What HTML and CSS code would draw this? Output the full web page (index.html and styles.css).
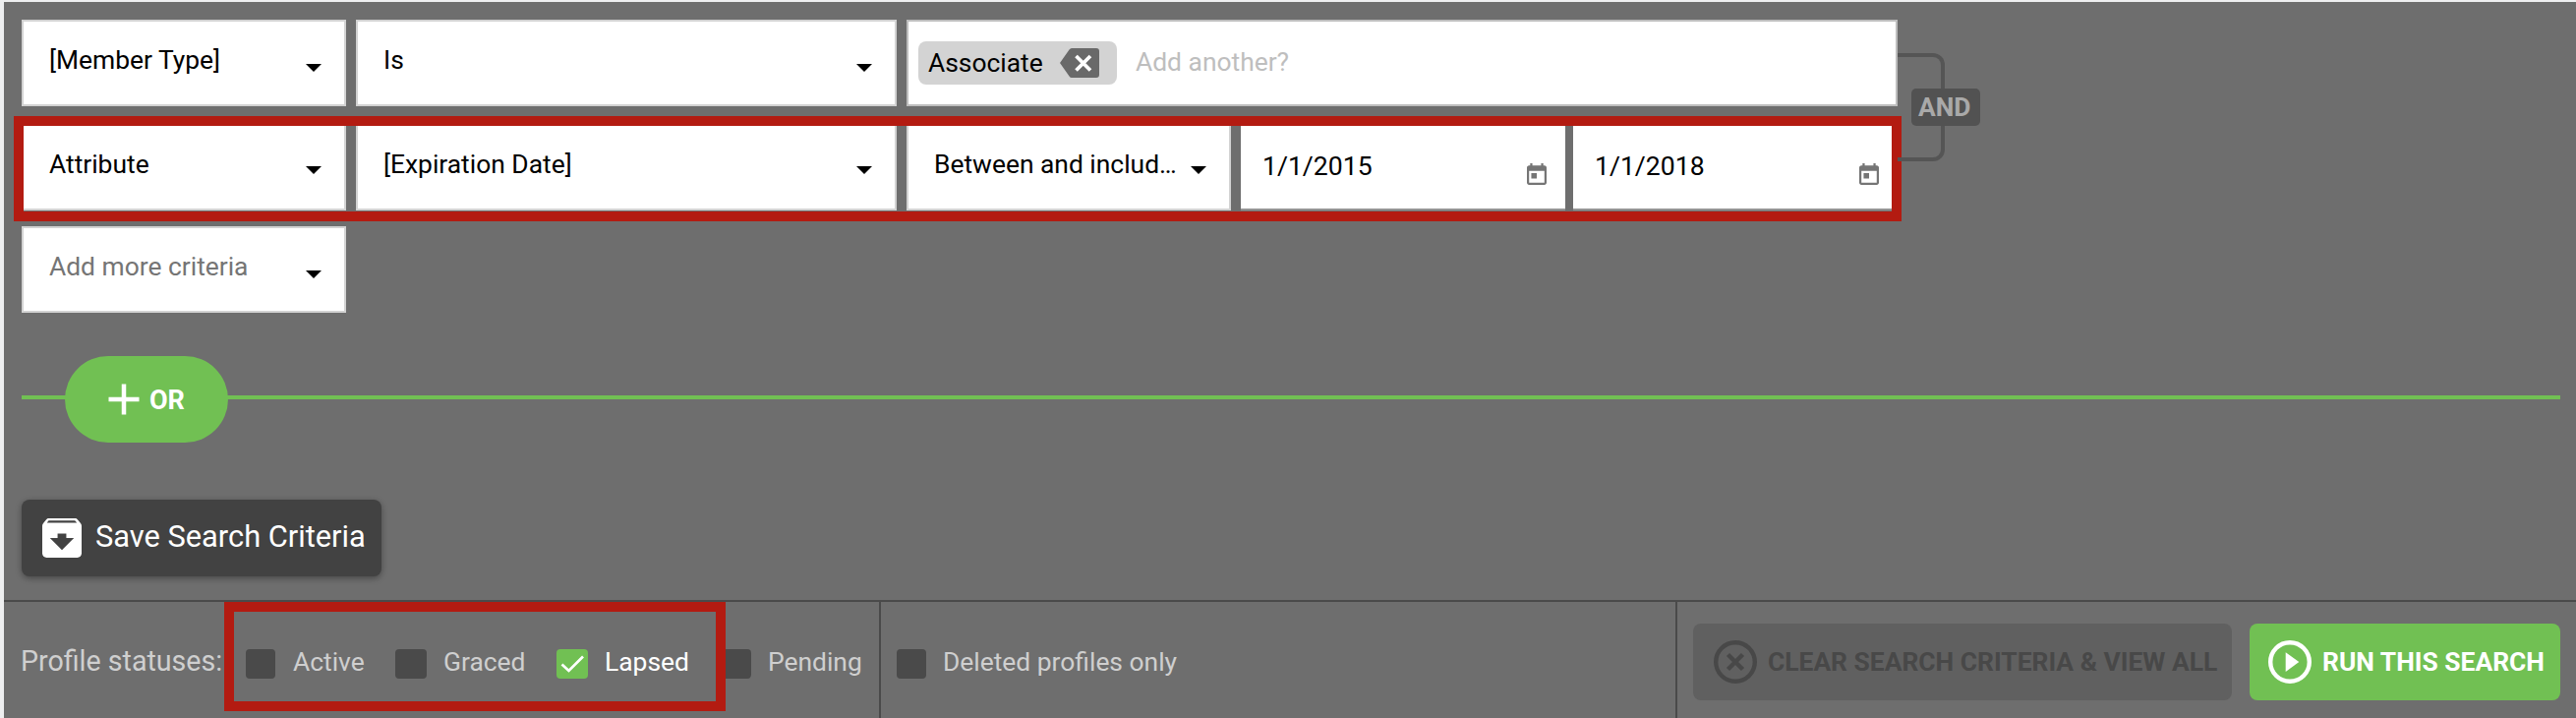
FILE: index.html
```html
<!DOCTYPE html>
<html lang="en">
<head>
    <meta charset="UTF-8">
    <meta name="viewport" content="width=device-width, initial-scale=1.0">
    <title>Advanced Search</title>
    <link rel="stylesheet" href="styles.css">
</head>
<body>
    <main class="search-panel">
        <section class="criteria">
            <div class="criteria-rows">
                <div class="row">
                    <div class="field select">
                        <span class="value">[Member Type]</span>
                        <span class="arrow"></span>
                    </div>
                    <div class="field select wide">
                        <span class="value">Is</span>
                        <span class="arrow"></span>
                    </div>
                    <div class="field tags">
                        <span class="tag">
                            Associate
                            <svg class="remove" width="40" height="30" viewBox="0 0 40 30">
                                <path d="M9.500 1.500Q10.500 0 12 0H37Q40 0 40 3V27Q40 30 37 30H12Q10.500 30 9.500 28.500L0 15z" fill="#696969"/>
                                <path d="M16.500 8L31 22.500M31 8L16.500 22.500" stroke="#fff" stroke-width="3.700"/>
                            </svg>
                        </span>
                        <span class="placeholder">Add another?</span>
                    </div>
                </div>

                <div class="row highlighted">
                    <div class="field select">
                        <span class="value">Attribute</span>
                        <span class="arrow"></span>
                    </div>
                    <div class="field select wide">
                        <span class="value">[Expiration Date]</span>
                        <span class="arrow"></span>
                    </div>
                    <div class="field select">
                        <span class="value">Between and includ…</span>
                        <span class="arrow"></span>
                    </div>
                    <div class="dates">
                        <div class="date">
                            <span>1/1/2015</span>
                            <svg class="calendar" width="20" height="22" viewBox="3 1 18 20" preserveAspectRatio="none">
                                <path d="M19 3h-1V1h-2v2H8V1H6v2H5c-1.110 0-1.990.9-1.990 2L3 19c0 1.100.89 2 2 2h14c1.100 0 2-.9 2-2V5c0-1.100-.9-2-2-2zm0 16H5V8h14v11zM7 10h5v5H7z"/>
                            </svg>
                        </div>
                        <div class="date">
                            <span>1/1/2018</span>
                            <svg class="calendar" width="20" height="22" viewBox="3 1 18 20" preserveAspectRatio="none">
                                <path d="M19 3h-1V1h-2v2H8V1H6v2H5c-1.110 0-1.990.9-1.990 2L3 19c0 1.100.89 2 2 2h14c1.100 0 2-.9 2-2V5c0-1.100-.9-2-2-2zm0 16H5V8h14v11zM7 10h5v5H7z"/>
                            </svg>
                        </div>
                    </div>
                    <div class="marker marker-row"></div>
                </div>

                <div class="row">
                    <div class="field select empty">
                        <span class="value">Add more criteria</span>
                        <span class="arrow"></span>
                    </div>
                </div>
            </div>

            <div class="joiner">
                <span class="joiner-label">AND</span>
            </div>
        </section>

        <div class="or-divider">
            <button class="or-button">
                <svg width="32" height="32" viewBox="0 0 32 32">
                    <path d="M16 0.500V31.500M0.500 16H31.500" stroke="#fff" stroke-width="4.500"/>
                </svg>
                <span>OR</span>
            </button>
        </div>

        <button class="save-button">
            <svg width="40" height="40" viewBox="3 3 18 18">
                <path fill="#fff" d="M20.540 5.230l-1.390-1.680C18.880 3.210 18.470 3 18 3H6c-.47 0-.88.21-1.160.55L3.460 5.230C3.170 5.570 3 6.020 3 6.500V19c0 1.100.9 2 2 2h14c1.100 0 2-.9 2-2V6.500c0-.48-.17-.93-.46-1.270zM12 17.500L6.500 12H10v-2h4v2h3.500L12 17.500zM5.120 5l.81-1h12l.94 1H5.120z"/>
            </svg>
            <span>Save Search Criteria</span>
        </button>

        <footer class="status-bar">
            <div class="statuses">
                <span class="statuses-title">Profile statuses:</span>
                <div class="status-list">
                    <label class="status"><span class="box small"></span>Active</label>
                    <label class="status"><span class="box"></span>Graced</label>
                    <label class="status checked">
                        <span class="box">
                            <svg width="32" height="30" viewBox="0 0 32 30">
                                <path d="M5.500 15.500L12.500 22L27 7.500" fill="none" stroke="#fff" stroke-width="2.700"/>
                            </svg>
                        </span>Lapsed
                    </label>
                    <label class="status"><span class="box"></span>Pending</label>
                </div>
                <div class="marker marker-statuses"></div>
            </div>
            <div class="deleted">
                <label class="status"><span class="box small"></span>Deleted profiles only</label>
            </div>
            <div class="actions">
                <button class="action clear">
                    <svg width="44" height="44" viewBox="0 0 44 44" fill="none" stroke="#484848">
                        <circle cx="22" cy="22" r="19.800" stroke-width="4.400"/>
                        <path d="M14.500 14.500L29.500 29.500M29.500 14.500L14.500 29.500" stroke-width="4.400"/>
                    </svg>
                    <span>CLEAR SEARCH CRITERIA &amp; VIEW ALL</span>
                </button>
                <button class="action run">
                    <svg width="44" height="44" viewBox="0 0 44 44">
                        <circle cx="22" cy="22" r="19.800" fill="none" stroke="#fff" stroke-width="4.400"/>
                        <path d="M17.700 12.300V32L31.300 22.100z" fill="#fff"/>
                    </svg>
                    <span>RUN THIS SEARCH</span>
                </button>
            </div>
        </footer>
    </main>
</body>
</html>
```
FILE: styles.css
```css
* {
    box-sizing: border-box;
}
body {
    margin: 0;
    padding: 2px 0 0 4px;
    height: 730px;
    overflow: hidden;
    background-color: #eeeff0;
    font-family: Roboto, sans-serif;
    font-size: 26.4px;
    color: #000;
}
button {
    border: none;
    font-family: inherit;
    font-size: inherit;
    cursor: pointer;
}
svg {
    display: block;
    flex: none;
}
.search-panel {
    height: 728px;
    background-color: #6e6e6e;
    display: flex;
    flex-direction: column;
    align-items: flex-start;
}

/* Criteria rows */
.criteria {
    display: flex;
    align-items: flex-start;
    padding: 18px 0 0 18px;
}
.criteria-rows {
    width: 1908px;
}
.row {
    display: flex;
    gap: 10px;
    height: 88px;
}
.row.highlighted {
    position: relative;
    margin: 18px 0 16px;
}
.field {
    display: flex;
    align-items: center;
    background-color: #fff;
    border: 2px solid #d3d3d3;
}
.select {
    width: 330px;
    padding: 0 23px 0 26px;
}
.select.wide {
    width: 550px;
}
.value {
    flex: 1;
    padding-bottom: 6px;
    white-space: nowrap;
}
.empty .value {
    color: #757575;
}
.arrow {
    margin-top: 10px;
    border: 8px solid transparent;
    border-top-color: #000;
    border-bottom: none;
}
.highlighted .arrow {
    margin-top: 6px;
}
.tags {
    flex: 1;
    padding-left: 10px;
    border-color: #bebebe;
}
.tag {
    display: flex;
    align-items: center;
    justify-content: space-between;
    width: 202px;
    height: 44px;
    padding: 0 18px 0 10px;
    border-radius: 8px;
    background-color: #d3d3d3;
}
.tag::first-line {
    line-height: 38px;
}
.placeholder {
    margin-left: 19px;
    padding-bottom: 2px;
    color: #bebebe;
}
.dates {
    display: flex;
    gap: 8px;
}
.date {
    display: flex;
    align-items: center;
    justify-content: space-between;
    width: 330px;
    padding: 0 19px 0 22px;
    background-color: #fff;
    border-bottom: 2px solid #949494;
    font-size: 26.6px;
}
.date span {
    padding-bottom: 1px;
}
.calendar {
    margin-top: 16px;
    fill: #757575;
}
.joiner {
    position: relative;
    width: 48px;
    height: 110px;
    margin-top: 34px;
    border: 4px solid #555;
    border-left: none;
    border-radius: 0 12px 12px 0;
}
.joiner-label {
    position: absolute;
    top: 32px;
    left: 14px;
    width: 70px;
    height: 38px;
    padding-left: 7px;
    border-radius: 5px;
    background-color: #525252;
    color: #a9a9a9;
    font-weight: 700;
    line-height: 39px;
}

/* Red outlines over the parts to look at */
.marker {
    position: absolute;
    border: 10px solid #b31b11;
}
.marker-row {
    top: -8px;
    left: -8px;
    width: 1920px;
    height: 107px;
}
.marker-statuses {
    top: 0;
    left: 224px;
    width: 510px;
    height: 111px;
}

.or-divider {
    align-self: stretch;
    margin: 44px 16px 0 18px;
    padding-left: 44px;
    background: linear-gradient(#71c053, #71c053) 0 40px / 100% 4px no-repeat;
}
.or-button {
    display: flex;
    align-items: center;
    gap: 10px;
    width: 166px;
    height: 88px;
    padding: 0 0 0 44px;
    border-radius: 44px;
    background-color: #71c053;
    color: #fff;
    font-size: 27px;
    font-weight: 700;
}
.or-button span {
    padding-top: 2px;
}
.save-button {
    display: flex;
    align-items: center;
    gap: 14px;
    width: 366px;
    height: 78px;
    margin: 58px 0 24px 18px;
    padding: 0 0 0 21px;
    border-radius: 8px;
    background-color: #424242;
    box-shadow: 0 2px 6px rgba(0, 0, 0, 0.35);
    color: #fff;
    font-size: 30.8px;
    white-space: nowrap;
}
.save-button span {
    padding-bottom: 3px;
}

/* Bottom bar */
.status-bar {
    align-self: stretch;
    display: flex;
    height: 120px;
    border-top: 2px solid #4a4a4a;
    color: #cfcfcf;
}
.statuses {
    position: relative;
    display: flex;
    align-items: center;
    width: 892px;
    padding: 4px 0 0 17px;
    border-right: 2px solid #4a4a4a;
}
.statuses-title {
    width: 229px;
    padding-bottom: 2px;
    font-size: 28.6px;
}
.status-list {
    display: grid;
    grid-template-columns: 152px 164px 166px auto;
}
.status {
    display: grid;
    grid-template-columns: 49px auto;
    align-items: center;
    white-space: nowrap;
}
.status:first-child {
    grid-template-columns: 48px auto;
}
.status.checked {
    color: #fff;
}
.box {
    width: 32px;
    height: 30px;
    margin-top: 4px;
    border-radius: 4px;
    background-color: #4a4a4a;
}
.box.small {
    width: 30px;
}
.checked .box {
    background-color: #71c053;
}
.deleted {
    display: flex;
    align-items: center;
    flex: 1;
    padding: 4px 0 0 16px;
}
.deleted .status {
    grid-template-columns: 47px auto;
}
.actions {
    display: flex;
    align-items: center;
    gap: 18px;
    padding: 4px 16px 0 16px;
    border-left: 2px solid #4a4a4a;
}
.action {
    display: flex;
    align-items: center;
    gap: 11px;
    height: 78px;
    padding: 0 0 0 21px;
    border-radius: 8px;
    font-weight: 700;
    white-space: nowrap;
}
.clear {
    width: 548px;
    background-color: #606060;
    color: #484848;
}
.run {
    width: 316px;
    padding-left: 19px;
    background-color: #71c053;
    color: #fff;
}
```
